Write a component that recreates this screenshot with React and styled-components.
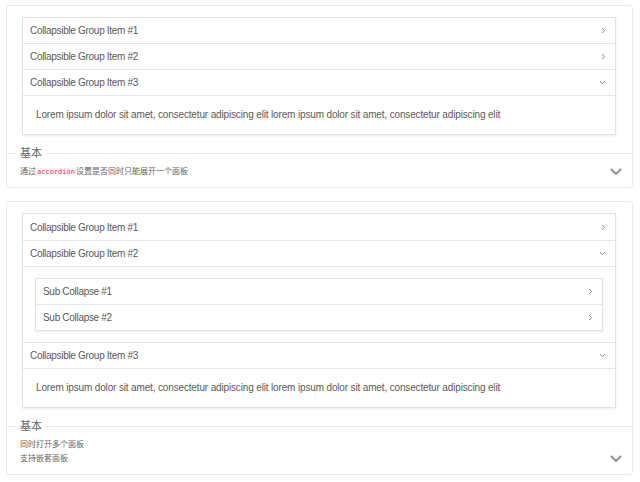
import React from "react";
import styled, { createGlobalStyle } from "styled-components";

const Global = createGlobalStyle`
  html, body { margin: 0; padding: 0; background: #fff; }
  body { font-family: "Liberation Sans", "Noto Sans CJK SC", sans-serif; color: #555; }
`;

const Page = styled.div`
  display: flex;
  flex-direction: column;
  gap: 13px;
  padding: 5px 7px 8px 6px;
`;

const Card = styled.section`
  border: 1px solid #ececec;
  border-radius: 3px;
  background: #fff;
`;

const Demo = styled.div`
  padding: 11px 16px 18px 15px;
`;

const Meta = styled.div`
  position: relative;
  border-top: 1px solid #ececec;
  display: flex;
  align-items: flex-end;
  padding: 11px 9px 8px 13px;
`;

const MetaTitle = styled.span`
  position: absolute;
  left: 9px;
  top: -8px;
  padding: 0 4px;
  background: #fff;
  font-size: 11px;
  line-height: 15px;
  color: #666;
`;

const Desc = styled.div`
  flex: 1;
  font-size: 8px;
  line-height: 14px;
  color: #666;
`;

const Code = styled.code`
  font-family: "DejaVu Sans Mono", "Liberation Mono", monospace;
  font-size: 7px;
  color: #e0365a;
  background: #fdf3f5;
  padding: 0 1px;
`;

const Expand = styled.span`
  display: flex;
  width: 14px;
  height: 14px;
  align-items: center;
  justify-content: center;
`;

const Collapse = styled.div`
  border: 1px solid #e3e3e3;
  box-shadow: 0 1px 2px rgba(0, 0, 0, 0.08);
  background: #fff;
`;

const Item = styled.div`
  & + & {
    border-top: 1px solid #e6e6e6;
  }
`;

const Header = styled.div`
  display: flex;
  align-items: center;
  justify-content: space-between;
  height: ${(p) => (p.$tall ? "26px" : "25px")};
  padding: 0 9px 0 7px;
  font-size: 10px;
  letter-spacing: -0.3px;
  color: #5a5a5a;
`;

const Body = styled.div`
  border-top: 1px solid #e6e6e6;
  padding: ${(p) => (p.$nested ? "11px 12px 11px 12px" : "12px 13px 12px 13px")};
  font-size: 10px;
  line-height: 14px;
  letter-spacing: -0.15px;
  color: #5a5a5a;
`;

const Chevron = ({ open }) =>
  open ? (
    <svg width="7" height="5" viewBox="0 0 7 5">
      <path d="M1 1.2 L3.5 3.6 L6 1.2" fill="none" stroke="#888" strokeWidth="1" />
    </svg>
  ) : (
    <svg width="5" height="7" viewBox="0 0 5 7">
      <path d="M1.2 1 L3.6 3.5 L1.2 6" fill="none" stroke="#888" strokeWidth="1" />
    </svg>
  );

const BigChevron = () => (
  <svg width="12" height="8" viewBox="0 0 12 8">
    <path d="M1.5 1.5 L6 6 L10.5 1.5" fill="none" stroke="#999" strokeWidth="2.2" strokeLinecap="round" strokeLinejoin="round" />
  </svg>
);

const lorem =
  "Lorem ipsum dolor sit amet, consectetur adipiscing elit lorem ipsum dolor sit amet, consectetur adipiscing elit";

const Panel = ({ title, open, nested, tall, children }) => (
  <Item>
    <Header $tall={tall}>
      <span>{title}</span>
      <Chevron open={open} />
    </Header>
    {open && <Body $nested={nested}>{children}</Body>}
  </Item>
);

export default function App() {
  return (
    <>
      <Global />
      <Page>
        <Card>
          <Demo>
            <Collapse>
              <Panel title="Collapsible Group Item #1" />
              <Panel title="Collapsible Group Item #2" />
              <Panel title="Collapsible Group Item #3" open>
                {lorem}
              </Panel>
            </Collapse>
          </Demo>
          <Meta>
            <MetaTitle>基本</MetaTitle>
            <Desc>
              通过<Code>accordion</Code>设置是否同时只能展开一个面板
            </Desc>
            <Expand>
              <BigChevron />
            </Expand>
          </Meta>
        </Card>
        <Card>
          <Demo>
            <Collapse>
              <Panel title="Collapsible Group Item #1" tall />
              <Panel title="Collapsible Group Item #2" open nested>
                <Collapse>
                  <Panel title="Sub Collapse #1" />
                  <Panel title="Sub Collapse #2" />
                </Collapse>
              </Panel>
              <Panel title="Collapsible Group Item #3" open>
                {lorem}
              </Panel>
            </Collapse>
          </Demo>
          <Meta>
            <MetaTitle>基本</MetaTitle>
            <Desc>
              同时打开多个面板
              <br />
              支持嵌套面板
            </Desc>
            <Expand>
              <BigChevron />
            </Expand>
          </Meta>
        </Card>
      </Page>
    </>
  );
}
